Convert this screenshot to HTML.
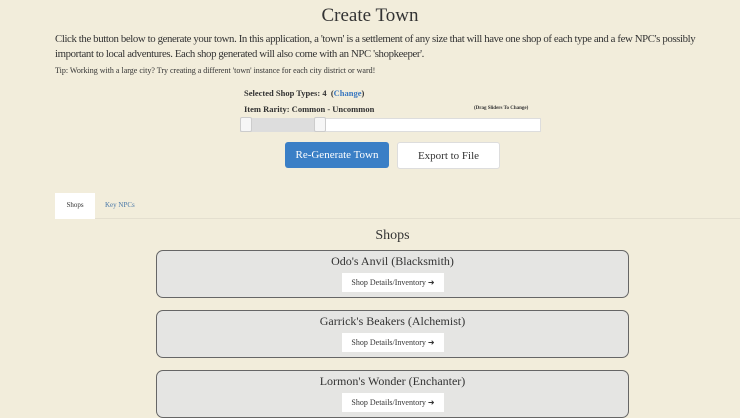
<!DOCTYPE html>
<html><head><meta charset="utf-8"><style>
body{margin:0;width:740px;height:400px;overflow:hidden;background:#f2eddb;font-family:"Liberation Serif",serif;color:#333;position:relative}
.a{position:absolute;white-space:nowrap}
h1{position:absolute;top:5px;left:0;width:740px;text-align:center;margin:0;font-size:19px;font-weight:normal;color:#333}
.p{left:55px;font-size:10.8px;letter-spacing:-0.38px;color:#333}
.btn{position:absolute;top:142px;height:26px;border-radius:3px;font-size:11px;text-align:center;line-height:26px}
.card{position:absolute;left:156px;width:471px;height:46px;border:1.5px solid #666;border-radius:7px;background:#e5e5e3}
.card .t{position:absolute;top:3px;width:100%;text-align:center;font-size:12px;color:#333}
.card .b{position:absolute;left:185px;top:22px;width:102px;height:19px;background:#fff;font-size:8px;text-align:center;line-height:19px;color:#333}
</style></head><body>
<h1>Create Town</h1>
<div class="a p" style="top:33px">Click the button below to generate your town. In this application, a 'town' is a settlement of any size that will have one shop of each type and a few NPC's possibly</div>
<div class="a p" style="top:48px">important to local adventures. Each shop generated will also come with an NPC 'shopkeeper'.</div>
<div class="a" style="left:55px;top:66px;font-size:8px">Tip: Working with a large city? Try creating a different 'town' instance for each city district or ward!</div>
<div class="a" style="left:244px;top:88px;font-size:8.5px;font-weight:bold">Selected Shop Types: 4 &nbsp;(<span style="color:#3a78c0">Change</span>)</div>
<div class="a" style="left:244px;top:104px;font-size:8.5px;font-weight:bold">Item Rarity: Common - Uncommon</div>
<div class="a" style="left:474px;top:106px;font-size:5px;font-weight:bold">(Drag Sliders To Change)</div>
<div class="a" style="left:240px;top:118px;width:299px;height:12px;background:#fff;border:1px solid #ddd"></div>
<div class="a" style="left:246px;top:119px;width:72px;height:12px;background:#ddd"></div>
<div class="a" style="left:240px;top:117px;width:10px;height:13px;background:#f6f6f6;border:1px solid #ccc;border-radius:2px"></div>
<div class="a" style="left:314px;top:117px;width:10px;height:13px;background:#f6f6f6;border:1px solid #ccc;border-radius:2px"></div>
<div class="btn" style="left:285px;width:104px;background:#3a7fc6;color:#fff">Re-Generate Town</div>
<div class="btn" style="left:397px;width:101px;background:#fff;border:1px solid #ddd;height:25px">Export to File</div>
<div class="a" style="left:55px;top:193px;width:40px;height:26px;background:#fff;font-size:7px;text-align:center;line-height:24px">Shops</div>
<div class="a" style="left:105px;top:193px;font-size:7px;line-height:24px;color:#4a78a8">Key NPCs</div>
<div class="a" style="left:95px;top:218px;width:645px;height:1px;background:#e4dfcf"></div>
<div class="a" style="left:0;top:228px;width:785px;text-align:center;font-size:14px">Shops</div>
<div class="card" style="top:250px"><div class="t">Odo's Anvil (Blacksmith)</div><div class="b">Shop Details/Inventory ➜</div></div>
<div class="card" style="top:310px"><div class="t">Garrick's Beakers (Alchemist)</div><div class="b">Shop Details/Inventory ➜</div></div>
<div class="card" style="top:370px"><div class="t">Lormon's Wonder (Enchanter)</div><div class="b">Shop Details/Inventory ➜</div></div>
</body></html>
